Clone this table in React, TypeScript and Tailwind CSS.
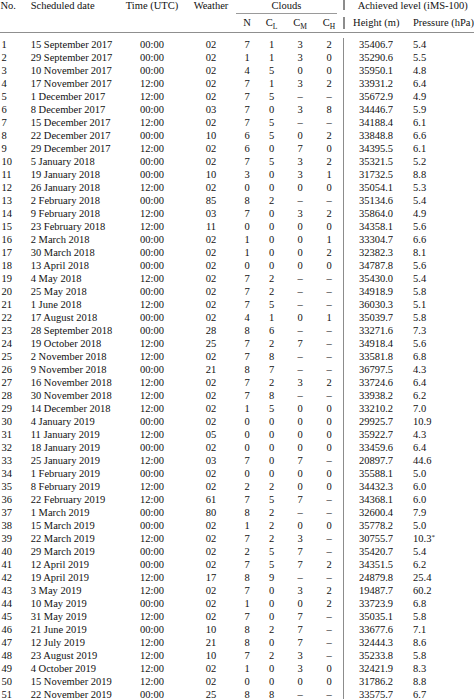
import { FC } from "react";

const data = `1|15 September 2017|00:00|02|7|1|3|2|35406.7|5.4
2|29 September 2017|00:00|02|1|1|3|0|35290.6|5.5
3|10 November 2017|00:00|02|4|5|0|0|35950.1|4.8
4|17 November 2017|12:00|02|7|1|3|2|33931.2|6.4
5|1 December 2017|12:00|02|7|5|–|–|35672.9|4.9
6|8 December 2017|00:00|03|7|0|3|8|34446.7|5.9
7|15 December 2017|12:00|02|7|5|–|–|34188.4|6.1
8|22 December 2017|00:00|10|6|5|0|2|33848.8|6.6
9|29 December 2017|12:00|02|6|0|7|0|34395.5|6.1
10|5 January 2018|00:00|02|7|5|3|2|35321.5|5.2
11|19 January 2018|00:00|10|3|0|3|1|31732.5|8.8
12|26 January 2018|12:00|02|0|0|0|0|35054.1|5.3
13|2 February 2018|00:00|85|8|2|–|–|35134.6|5.4
14|9 February 2018|12:00|03|7|0|3|2|35864.0|4.9
15|23 February 2018|12:00|11|0|0|0|0|34358.1|5.6
16|2 March 2018|00:00|02|1|0|0|1|33304.7|6.6
17|30 March 2018|00:00|02|1|0|0|2|32382.3|8.1
18|13 April 2018|00:00|02|0|0|0|0|34787.8|5.6
19|4 May 2018|12:00|02|7|2|–|–|35430.0|5.4
20|25 May 2018|00:00|02|7|2|–|–|34918.9|5.8
21|1 June 2018|12:00|02|7|5|–|–|36030.3|5.1
22|17 August 2018|00:00|02|4|1|0|1|35039.7|5.8
23|28 September 2018|00:00|28|8|6|–|–|33271.6|7.3
24|19 October 2018|12:00|25|7|2|7|–|34918.4|5.6
25|2 November 2018|12:00|02|7|8|–|–|33581.8|6.8
26|9 November 2018|00:00|21|8|7|–|–|36797.5|4.3
27|16 November 2018|12:00|02|7|2|3|2|33724.6|6.4
28|30 November 2018|12:00|02|7|8|–|–|33938.2|6.2
29|14 December 2018|12:00|02|1|5|0|0|33210.2|7.0
30|4 January 2019|00:00|02|0|0|0|0|29925.7|10.9
31|11 January 2019|12:00|05|0|0|0|0|35922.7|4.3
32|18 January 2019|00:00|02|0|0|0|0|33459.6|6.4
33|25 January 2019|12:00|03|7|0|7|–|20897.7|44.6
34|1 February 2019|00:00|02|0|0|0|0|35588.1|5.0
35|8 February 2019|12:00|02|2|2|0|0|34432.3|6.0
36|22 February 2019|12:00|61|7|5|7|–|34368.1|6.0
37|1 March 2019|00:00|80|8|2|–|–|32600.4|7.9
38|15 March 2019|00:00|02|1|2|0|0|35778.2|5.0
39|22 March 2019|12:00|02|7|2|3|–|30755.7|10.3*
40|29 March 2019|00:00|02|2|5|7|–|35420.7|5.4
41|12 April 2019|00:00|02|7|5|7|2|34351.5|6.2
42|19 April 2019|12:00|17|8|9|–|–|24879.8|25.4
43|3 May 2019|12:00|02|7|0|3|2|19487.7|60.2
44|10 May 2019|00:00|02|1|0|0|2|33723.9|6.8
45|31 May 2019|12:00|02|7|0|7|–|35035.1|5.8
46|21 June 2019|00:00|10|8|2|7|–|33677.6|7.1
47|12 July 2019|12:00|21|8|0|7|–|32444.3|8.6
48|23 August 2019|12:00|10|7|2|3|–|35233.8|5.8
49|4 October 2019|12:00|02|1|0|3|0|32421.9|8.3
50|15 November 2019|12:00|02|0|0|0|0|31786.2|8.8
51|22 November 2019|00:00|25|8|8|–|–|33575.7|6.7`;

const rows = data.split("\n").map((line) => line.split("|"));

const C: FC<{ sub: string }> = ({ sub }) => (
  <span>
    C<span className="relative top-[2.5px] text-[7.5px]">{sub}</span>
  </span>
);

const Pressure: FC<{ value: string }> = ({ value }) =>
  value.endsWith("*") ? (
    <span>
      {value.slice(0, -1)}
      <span className="relative -top-[3px] text-[7px]">*</span>
    </span>
  ) : (
    <span>{value}</span>
  );

export default function App() {
  return (
    <div className="w-[474px] h-[699px] overflow-hidden bg-white font-['Liberation_Serif','Times_New_Roman',serif] text-[10.5px] text-[#111111] whitespace-nowrap">
      {/* header, first line */}
      <div className="flex h-[14px] leading-[11px]">
        <div className="w-[30px] pl-[0.5px]">No.</div>
        <div className="w-[98px] pl-[0.7px]">Scheduled date</div>
        <div className="w-[48px] flex justify-center">Time (UTC)</div>
        <div className="w-[53px] pl-[17px] flex justify-center">Weather</div>
        <div className="w-[114px] pl-[7px] pr-[6px]">
          <div className="h-[13.5px] flex justify-center border-b border-[#9a9a9a]">Clouds</div>
        </div>
        <div className="w-[131px] flex">
          <div className="w-[1.5px] h-[9.5px] bg-[#8c8c8c]" />
          <div className="flex-1 pl-[7px] flex justify-center">Achieved level (iMS-100)</div>
        </div>
      </div>

      {/* header, second line */}
      <div className="flex h-[19px] items-center border-b border-[#8f8f8f]">
        <div className="w-[229px]" />
        <div className="w-[36px] flex justify-center">N</div>
        <div className="w-[13px] flex justify-center">
          <C sub="L" />
        </div>
        <div className="w-[44px] flex justify-center">
          <C sub="M" />
        </div>
        <div className="w-[14px] flex justify-center">
          <C sub="H" />
        </div>
        <div className="w-[7px]" />
        <div className="w-[65px] h-full flex items-center">
          <div className="w-[1.5px] h-[12.5px] bg-[#8c8c8c]" />
          <div className="flex-1 flex justify-center">Height (m)</div>
        </div>
        <div className="flex-1 pl-[5px]">Pressure (hPa)</div>
      </div>

      {/* body */}
      <div className="pt-[4.5px]">
        {rows.map((r) => (
          <div key={r[0]} className="flex h-[13.02px] leading-[13px]">
            <div className="w-[30px] pl-[1.5px]">{r[0]}</div>
            <div className="w-[98px] pl-[0.7px]">{r[1]}</div>
            <div className="w-[48px] flex justify-center">{r[2]}</div>
            <div className="w-[53px] pl-[17px] flex justify-center">{r[3]}</div>
            <div className="w-[36px] flex justify-center">{r[4]}</div>
            <div className="w-[13px] flex justify-center">{r[5]}</div>
            <div className="w-[44px] flex justify-center">{r[6]}</div>
            <div className="w-[14px] flex justify-center">{r[7]}</div>
            <div className="w-[7px]" />
            <div className="w-[65px] border-l-[1.5px] border-[#8c8c8c] flex justify-center">{r[8]}</div>
            <div className="flex-1 pl-[5px]">
              <Pressure value={r[9]} />
            </div>
          </div>
        ))}
      </div>
    </div>
  );
}
